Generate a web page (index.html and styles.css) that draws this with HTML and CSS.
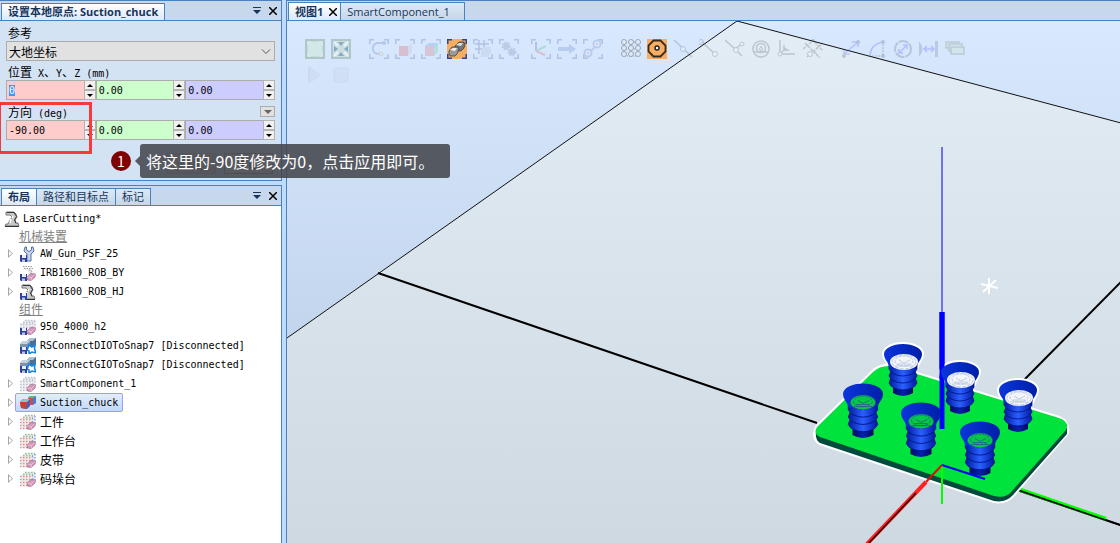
FILE: index.html
```
<!DOCTYPE html>
<html lang="zh-CN">

<head>
    <meta charset="utf-8">
    <meta name="viewport" content="width=device-width, initial-scale=1.0">
    <title>视图1</title>
    <link rel="stylesheet" href="styles.css">
</head>

<body>
    <!-- shared icons -->
    <svg class="defs" width="0" height="0" aria-hidden="true">
        <defs>
            <symbol id="corners" viewBox="0 0 20 20">
                <path d="M0 5V0H5M15 0H20V5M20 15V20H15M5 20H0V15" fill="none" stroke="#33448a" stroke-width="3" />
            </symbol>
            <symbol id="menu" viewBox="0 0 8 7">
                <path d="M0 0H8V1H0zM0 3H8L4 7z" fill="#17365d" />
            </symbol>
            <symbol id="close" viewBox="0 0 8 8">
                <path d="M0 0L8 8M8 0L0 8" stroke="#000" stroke-width="1.500" />
            </symbol>
            <symbol id="robot" viewBox="0 0 16 16">
                <path d="M2 1H10L12 3L13 6L11 9L12 12H14L15 15H1L2 13H4L6 9L8 6L6 4H2z" fill="#c9c9c9" stroke="#777" />
                <path d="M3 1.500H10L12.500 5.500L10.500 9L12 12.500M1 15.500H15" fill="none" stroke="#333" />
                <path d="M7 8L6 12M9 5L8 7" stroke="#fff" stroke-width="1.500" />
            </symbol>
            <symbol id="robot-off" viewBox="0 0 16 16">
                <path d="M4 4H11L13 7L10 9V14H5L9 7z" fill="#eee" />
                <path d="M3 1.500H13M4 3.500H13M9 5L12 6L9 11L10 14" fill="none" stroke="#999" stroke-dasharray="1.500 1" />
            </symbol>
            <symbol id="disk" viewBox="0 0 16 16">
                <path d="M0 9H7V16H1L0 15z" fill="#2f3f9f" />
                <path d="M2 9H6V12H2z" fill="#e8eefc" />
                <path d="M2 13.500H5V16H2z" fill="#b9c2dc" />
            </symbol>
            <symbol id="eraser" viewBox="0 0 16 16">
                <path d="M7 12L11 8.500L15.500 9L15 12L11 15.500L7.500 15z" fill="#d49aba" stroke="#a0607f" stroke-width=".7" />
                <path d="M7 12L11.500 12.500L15.500 9M11.500 12.500L11 15.500" fill="none" stroke="#f0cfe0" stroke-width=".7" />
            </symbol>
            <symbol id="wrench" viewBox="0 0 16 16">
                <path d="M5 1L4 5L7 8V15H11V8L14 5L13 1L11.500 1V4L9 5.500L6.500 4V1z" fill="#c5d3ea" stroke="#5670a3" />
            </symbol>
            <symbol id="grid" viewBox="0 0 16 16">
                <path d="M1 5L5 1H15V10L11 15H1z" fill="#f1ecec" />
                <path d="M0 5.500H11M0 8.500H11M0 11.500H11M0 14.500H9" stroke="#df8d8d" stroke-width="1.500" stroke-dasharray="1.500 1.500" />
                <path d="M3 3.500H13M5 1.500H15" fill="none" stroke="#8fbf9d" stroke-width="1.500" stroke-dasharray="1.500 1.500" />
                <path d="M12.500 4V12M15 2V10" stroke="#86a4dc" stroke-width="1.500" stroke-dasharray="1.500 1.500" />
            </symbol>
            <symbol id="grid-grey" viewBox="0 0 16 16">
                <path d="M1 5L5 1H15V10L11 15H1z" fill="#eceef2" />
                <path d="M0 5.500H11M0 8.500H11M0 11.500H11M0 14.500H9M3 3.500H13M5 1.500H15" stroke="#bcc0cd" stroke-width="1.500" stroke-dasharray="1.500 1.500" />
                <path d="M12.500 4V12M15 2V10" stroke="#bcc0cd" stroke-width="1.500" stroke-dasharray="1.500 1.500" />
            </symbol>
            <symbol id="smart" viewBox="0 0 16 16">
                <path d="M7 3L10 0H16V7L13 9H7z" fill="#4f6f92" />
                <path d="M7 3L10 0H16L13 3z" fill="#a9bfd2" />
                <path d="M0 6L3 3H10V10L7 13H0z" fill="#7d93ac" />
                <path d="M0 6L3 3H10L7 6z" fill="#c4d2df" />
                <path d="M7 12L9 7L12 9L15 7L14.500 11L16 15L12 14L9 16L9 13z" fill="#fff" stroke="#1583e0" stroke-width="1.600" />
            </symbol>
            <symbol id="cubes" viewBox="0 0 16 16">
                <path d="M8 3L10 1H16V8L13 10H8z" fill="#3d7be0" />
                <path d="M8 3L10 1H16L14 3z" fill="#62b58a" />
                <path d="M8 3H13V10H8z" fill="#d34f3d" />
                <path d="M0 7L3 4H10V11L7 14L1 13z" fill="#3566c8" />
                <path d="M0 7L3 4H10L7 7z" fill="#8cc8b0" />
                <path d="M0 7H7V14L1 13z" fill="#cf3f31" />
            </symbol>
        </defs>
    </svg>

    <div class="app">
        <aside class="sidebar">
            <section class="panel">
                <header class="tab-bar">
                    <h1 class="tab active">设置本地原点: Suction_chuck</h1>
                    <div class="panel-tools">
                        <button type="button" aria-label="菜单"><svg width="8" height="7"><use href="#menu" /></svg></button>
                        <button type="button" aria-label="关闭面板"><svg width="8" height="8"><use href="#close" /></svg></button>
                    </div>
                </header>
                <form class="origin-form" id="originForm">
                    <label for="reference">参考</label>
                    <div class="select-box">
                        <select id="reference">
                            <option>大地坐标</option>
                        </select>
                        <svg width="10" height="6"><path d="M1 .5L5 4.500L9 .5" fill="none" stroke="#555" /></svg>
                    </div>

                    <label for="posX">位置<span class="mono"> X</span>、<span class="mono">Y</span>、<span class="mono">Z (mm)</span></label>
                    <div class="vector">
                        <div class="field red">
                            <input type="text" id="posX" value="0">
                            <div class="spin"><button type="button" class="up" aria-label="X +"></button><button type="button" class="down" aria-label="X -"></button></div>
                        </div>
                        <div class="field green">
                            <input type="text" aria-label="位置 Y" value="0.00">
                            <div class="spin"><button type="button" class="up" aria-label="Y +"></button><button type="button" class="down" aria-label="Y -"></button></div>
                        </div>
                        <div class="field blue">
                            <input type="text" aria-label="位置 Z" value="0.00">
                            <div class="spin"><button type="button" class="up" aria-label="Z +"></button><button type="button" class="down" aria-label="Z -"></button></div>
                        </div>
                    </div>

                    <div class="label-row">
                        <label for="rotX">方向<span class="mono"> (deg)</span></label>
                        <button type="button" class="drop" aria-label="方向选项"></button>
                    </div>
                    <div class="vector">
                        <div class="field red">
                            <input type="text" id="rotX" value="-90.00">
                            <div class="spin"><button type="button" class="up" aria-label="RX +"></button><button type="button" class="down" aria-label="RX -"></button></div>
                        </div>
                        <div class="field green">
                            <input type="text" aria-label="方向 Y" value="0.00">
                            <div class="spin"><button type="button" class="up" aria-label="RY +"></button><button type="button" class="down" aria-label="RY -"></button></div>
                        </div>
                        <div class="field blue">
                            <input type="text" aria-label="方向 Z" value="0.00">
                            <div class="spin"><button type="button" class="up" aria-label="RZ +"></button><button type="button" class="down" aria-label="RZ -"></button></div>
                        </div>
                    </div>

                    <div class="actions">
                        <button type="submit" disabled>应用</button>
                        <button type="button">关闭</button>
                    </div>
                </form>
            </section>

            <section class="panel tree-panel">
                <header class="tab-bar">
                    <button type="button" class="tab active">布局</button>
                    <button type="button" class="tab">路径和目标点</button>
                    <button type="button" class="tab">标记</button>
                    <div class="panel-tools">
                        <button type="button" aria-label="菜单"><svg width="8" height="7"><use href="#menu" /></svg></button>
                        <button type="button" aria-label="关闭面板"><svg width="8" height="8"><use href="#close" /></svg></button>
                    </div>
                </header>
                <ul class="tree">
                    <li class="root"><svg class="icon"><use href="#robot" /></svg><span class="mono">LaserCutting*</span></li>
                    <li class="group">机械装置</li>
                    <li><i class="arrow"></i><span class="node"><svg class="icon"><use href="#wrench" /><use href="#disk" /></svg><span class="mono">AW_Gun_PSF_25</span></span></li>
                    <li><i class="arrow"></i><span class="node"><svg class="icon"><use href="#robot-off" /><use href="#disk" /><use href="#eraser" /></svg><span class="mono">IRB1600_ROB_BY</span></span></li>
                    <li><i class="arrow"></i><span class="node"><svg class="icon"><use href="#robot" /><use href="#disk" /></svg><span class="mono">IRB1600_ROB_HJ</span></span></li>
                    <li class="group">组件</li>
                    <li><i class="arrow none"></i><span class="node"><svg class="icon"><use href="#grid-grey" /><use href="#disk" /><use href="#eraser" /></svg><span class="mono">950_4000_h2</span></span></li>
                    <li><i class="arrow none"></i><span class="node"><svg class="icon"><use href="#smart" /><use href="#disk" /></svg><span class="mono">RSConnectDIOToSnap7 [Disconnected]</span></span></li>
                    <li><i class="arrow none"></i><span class="node"><svg class="icon"><use href="#smart" /><use href="#disk" /></svg><span class="mono">RSConnectGIOToSnap7 [Disconnected]</span></span></li>
                    <li><i class="arrow"></i><span class="node"><svg class="icon"><use href="#grid-grey" /><use href="#eraser" /></svg><span class="mono">SmartComponent_1</span></span></li>
                    <li><i class="arrow"></i><span class="node selected"><svg class="icon"><use href="#cubes" /></svg><span class="mono">Suction_chuck</span></span></li>
                    <li><i class="arrow"></i><span class="node"><svg class="icon"><use href="#grid" /><use href="#eraser" /></svg>工件</span></li>
                    <li><i class="arrow"></i><span class="node"><svg class="icon"><use href="#grid" /><use href="#eraser" /></svg>工作台</span></li>
                    <li><i class="arrow"></i><span class="node"><svg class="icon"><use href="#grid" /><use href="#eraser" /></svg>皮带</span></li>
                    <li><i class="arrow"></i><span class="node"><svg class="icon"><use href="#grid" /><use href="#eraser" /></svg>码垛台</span></li>
                </ul>
            </section>
        </aside>

        <main class="view">
            <header class="tab-bar">
                <div class="tab active">视图1 <button type="button" class="tab-close" aria-label="关闭视图"><svg width="8" height="8"><use href="#close" /></svg></button></div>
                <button type="button" class="tab">SmartComponent_1</button>
            </header>
            <div class="viewport">
                <svg class="scene" viewBox="287 21 833 522" preserveAspectRatio="xMinYMin slice">
                    <defs>
                        <linearGradient id="floor" gradientUnits="userSpaceOnUse" x1="0" y1="21" x2="0" y2="543">
                            <stop offset="0" stop-color="#e2edf6" />
                            <stop offset="1" stop-color="#cfd9e2" />
                        </linearGradient>
                        <linearGradient id="rubber">
                            <stop offset="0" stop-color="#001a9c" />
                            <stop offset=".5" stop-color="#2a60ff" />
                            <stop offset="1" stop-color="#0018a0" />
                        </linearGradient>
                        <linearGradient id="bell">
                            <stop offset="0" stop-color="#0b35dc" />
                            <stop offset="1" stop-color="#001fa8" />
                        </linearGradient>
                        <linearGradient id="foot">
                            <stop offset="0" stop-color="#000a60" />
                            <stop offset=".5" stop-color="#0620b0" />
                            <stop offset="1" stop-color="#000a60" />
                        </linearGradient>
                        <path id="rim" d="M-19 0A19 10 0 0 1 19 0C19 6 14 8 14 13H-14C-14 8 -19 6 -19 0z" />
                        <g id="cup">
                            <path d="M-10 30V39Q0 45 10 39V30z" fill="url(#foot)" />
                            <g fill="url(#rubber)" stroke="#000f80" stroke-width=".8">
                                <path d="M-12 23L-14 29Q-12 33 -9 34Q0 38 9 34Q12 33 14 29L12 23z" />
                                <path d="M-12 17L-14 22Q-12 26 -9 27Q0 31 9 27Q12 26 14 22L12 17z" />
                                <path d="M-14 8V15Q-12 19 -9 20Q0 24 9 20Q12 19 14 15V8z" />
                            </g>
                            <use href="#rim" fill="url(#bell)" />
                        </g>
                        <g id="rings" fill="none" stroke="#26439f" stroke-width=".6">
                            <ellipse cy="8" rx="12" ry="7" stroke-dasharray="4 1" />
                            <ellipse cy="7" rx="9" ry="5" stroke-dasharray="3 1" />
                            <path d="M-9 12H9M-5 6L0 9L6 6M-6 10H6" />
                        </g>
                    </defs>

                    <path d="M737 21L1200 144V600H287V338z" fill="url(#floor)" />
                    <path d="M287 338L737 21L1200 144" fill="none" stroke="#111" />
                    <path d="M378 273L817 423M1020 491L1200 552M1023 381L1200 202" fill="none" stroke="#000" stroke-width="2" />
                    <path d="M1018 489L1106 519" stroke="#0f0" stroke-width="4" />
                    <path d="M1018 490L1120 525" stroke="#000" stroke-width="1.500" />
                    <path d="M942 147V312" stroke="#4b4be6" stroke-width="1.500" />
                    <path d="M942 312V382" stroke="#00f" stroke-width="5" />

                    <!-- plate and selection outline -->
                    <g fill="#fff" stroke="#fff" stroke-width="4" stroke-linejoin="round">
                        <use href="#rim" x="903" y="354" />
                        <use href="#rim" x="960" y="372" />
                        <use href="#rim" x="1018" y="390" />
                        <path d="M817 427L873 372Q880 365 891 366L1059 418Q1069 422 1067 433L1013 495Q1006 503 994 501L820 443Q812 438 817 427z" />
                    </g>
                    <path d="M816 432L1067 428V434L1013 495Q1006 503 994 501L820 443Q815 440 816 432z" fill="#004b3c" />
                    <path d="M818 426L873 372Q880 365 891 366L1059 418Q1070 422 1066 430L1012 491Q1006 499 994 496L820 437Q812 433 818 426z" fill="#00e23c" />
                    <path d="M942 312V429" stroke="#00f" stroke-width="5" />

                    <use href="#cup" x="903" y="354" />
                    <use href="#cup" x="960" y="372" />
                    <use href="#cup" x="1018" y="390" />
                    <g fill="#f2f6fa">
                        <ellipse cx="904" cy="362" rx="14" ry="8" />
                        <ellipse cx="961" cy="380" rx="14" ry="8" />
                        <ellipse cx="1019" cy="398" rx="14" ry="8" />
                    </g>
                    <g opacity=".4">
                        <use href="#rings" x="904" y="354" />
                        <use href="#rings" x="961" y="372" />
                        <use href="#rings" x="1019" y="390" />
                    </g>
                    <g transform="translate(863 394) scale(1.050)"><use href="#cup" /><ellipse cy="8" rx="12" ry="7" fill="#05c944" /><use href="#rings" /></g>
                    <g transform="translate(921 413) scale(1.050)"><use href="#cup" /><ellipse cy="8" rx="12" ry="7" fill="#05c944" /><use href="#rings" /></g>
                    <g transform="translate(980 432) scale(1.050)"><use href="#cup" /><ellipse cy="8" rx="12" ry="7" fill="#05c944" /><use href="#rings" /></g>

                    <!-- local origin -->
                    <path d="M942 465L985 479" stroke="#00f" stroke-width="2" />
                    <path d="M942 466V504" stroke="#0f0" stroke-width="2" />
                    <path d="M942 465L926 482" stroke="#e01000" stroke-width="2" />
                    <path d="M926 482L866 545" stroke="#f22" stroke-width="4" />
                    <path d="M916 493L868 544" stroke="#300" stroke-width="1.500" />
                    <path d="M989 278V294M981 284L998 288M996 280L983 292" stroke="#fff" stroke-width="2" />
                </svg>

                <div class="toolbar">
                    <div class="tool-group">
                        <button type="button" class="strong" aria-label="查看全部"><svg viewBox="0 0 20 20"><path d="M0 0H20V20H0z" fill="#7fa08a" /><path d="M2 2H18V18H2z" fill="#aecfae" /><path d="M6 3H14L17 6V14L14 17H6L3 14V6z" fill="#cfe8cd" /><path d="M3 6V3H6M14 3H17V6M17 14V17H14M6 17H3V14" fill="none" stroke="#fff" /></svg></button>
                        <button type="button" class="strong" aria-label="查看中心"><svg viewBox="0 0 20 20"><path d="M0 0H20V20H0z" fill="#7fa08a" /><path d="M2 2H18V18H2z" fill="#b9d6b9" /><path d="M3 3L7 7M17 3L13 7M3 17L7 13M17 17L13 13" stroke="#fff" stroke-width="2" /><path d="M7 3H13L10 7zM7 17H13L10 13zM3 7V13L7 10zM17 7V13L13 10z" fill="#2c5a82" /></svg></button>
                    </div>
                    <div class="tool-group">
                        <button type="button" aria-label="选择曲线"><svg viewBox="0 0 20 20"><use href="#corners" /><path d="M15 4H8Q3 6 4 11Q5 15 11 15" fill="none" stroke="#4660a8" stroke-width="2" /><circle cx="15" cy="4" r="2" fill="#4660a8" /><circle cx="12" cy="15" r="2" fill="#ffe24a" stroke="#886" /></svg></button>
                        <button type="button" aria-label="选择表面"><svg viewBox="0 0 20 20"><use href="#corners" /><path d="M4 7L8 4H17V13L13 17H4z" fill="#aeb8c6" /><path d="M4 7H13V17H4z" fill="#d33" /><path d="M4 7L8 4H17L13 7z" fill="#e6ebf0" /></svg></button>
                        <button type="button" aria-label="选择实体"><svg viewBox="0 0 20 20"><use href="#corners" /><path d="M4 7L8 4H17V13L13 17H4z" fill="#4b8" /><path d="M4 7H13V17H4z" fill="#d65050" /><path d="M4 7L8 4H17L13 7z" fill="#3e80d8" /></svg></button>
                        <button type="button" class="on" aria-label="选择部件"><svg viewBox="0 0 20 20"><path d="M0 0H20V20H0z" fill="#f7ad62" /><use href="#corners" /><path d="M8 7L12 3H17L18 5L17 9L14 12H8z" fill="#777" stroke="#333" stroke-width=".7" /><path d="M9 6L12 4H16L14 7z" fill="#ddd" /><path d="M2 12L5 8H11L12 10L10 15L8 17H3L2 15z" fill="#999" stroke="#333" stroke-width=".7" /><path d="M3 11L6 9H10L8 12z" fill="#eee" /></svg></button>
                        <button type="button" aria-label="选择组"><svg viewBox="0 0 20 20"><use href="#corners" /><path d="M6 1V15M11 1V15M2 5H16M2 10H16" stroke="#33448a" stroke-width="1.500" /><path d="M8 10L11 8H18V14L15 18H8z" fill="#a9b7c9" /></svg></button>
                        <button type="button" aria-label="选择机械装置"><svg viewBox="0 0 20 20"><use href="#corners" /><g fill="none" stroke="#5d6a98" stroke-width="3" stroke-dasharray="1.500 1"><circle cx="7" cy="7" r="3" /><circle cx="13" cy="13" r="3" /></g><circle cx="7" cy="7" r="3" fill="#5d6a98" /><circle cx="13" cy="13" r="3" fill="#5d6a98" /></svg></button>
                    </div>
                    <div class="tool-group near">
                        <button type="button" aria-label="选择目标点"><svg viewBox="0 0 20 20"><use href="#corners" /><path d="M5 3V12" stroke="#33b" stroke-width="2" /><path d="M5 12L15 7" stroke="#2b4" stroke-width="2" /><path d="M5 12L14 16" stroke="#d33" stroke-width="2" /></svg></button>
                        <button type="button" aria-label="选择移动指令"><svg viewBox="0 0 20 20"><use href="#corners" /><path d="M1 8H12V5L19 10L12 15V12H1z" fill="#4d6fc0" /></svg></button>
                        <button type="button" aria-label="选择路径"><svg viewBox="0 0 20 20"><use href="#corners" /><path d="M6 14L14 6" stroke="#4d6fc0" stroke-width="2" /><circle cx="5" cy="14" r="3.500" fill="#fff" stroke="#4d6fc0" stroke-width="2" /><circle cx="14" cy="5" r="3.500" fill="#fff" stroke="#4d6fc0" stroke-width="2" /><path d="M4 14H6M13 5H15" stroke="#d33" stroke-width="2" /></svg></button>
                    </div>
                    <div class="tool-group snap">
                        <button type="button" class="strong" aria-label="捕捉对象"><svg viewBox="0 0 20 20"><g fill="none" stroke="#555"><path d="M3 3H17V17H3zM10 3V17M3 10H17" stroke-dasharray="1 1" /><g fill="#e6f0fc"><circle cx="3" cy="3" r="2.500" /><circle cx="10" cy="3" r="2.500" /><circle cx="17" cy="3" r="2.500" /><circle cx="3" cy="9" r="2.500" /><circle cx="10" cy="9" r="2.500" /><circle cx="17" cy="9" r="2.500" /><circle cx="3" cy="15" r="2.500" /><circle cx="10" cy="15" r="2.500" /><circle cx="17" cy="15" r="2.500" /></g></g></svg></button>
                        <button type="button" class="on" aria-label="捕捉中心"><svg viewBox="0 0 20 20"><path d="M0 0H20V20H0z" fill="#f7ad62" /><path d="M6.500 1.500H13.500L18.500 6.500V12.500L13.500 17.500H6.500L1.500 12.500V6.500z" fill="none" stroke="#3a2a18" stroke-width="1.800" /><circle cx="10" cy="9" r="2" fill="#fff" stroke="#222" stroke-width="1.500" /></svg></button>
                        <button type="button" aria-label="捕捉中点"><svg viewBox="0 0 20 20"><path d="M1 1L19 18" stroke="#444" stroke-width="1.500" /><circle cx="10" cy="10" r="2.500" fill="#fff" stroke="#444" /></svg></button>
                        <button type="button" aria-label="捕捉末端"><svg viewBox="0 0 20 20"><path d="M3 3L16 15" stroke="#444" stroke-width="1.500" /><circle cx="2" cy="3" r="2.500" fill="none" stroke="#444" /><circle cx="16" cy="15" r="2.500" fill="#fff" stroke="#444" /></svg></button>
                        <button type="button" aria-label="捕捉边缘"><svg viewBox="0 0 20 20"><path d="M0 1L10 10L17 5M10 10L17 17" fill="none" stroke="#444" stroke-width="1.500" /><circle cx="11" cy="11" r="2.500" fill="#fff" stroke="#444" /><circle cx="17" cy="5" r="2" fill="#fff" stroke="#444" /></svg></button>
                        <button type="button" aria-label="捕捉重心"><svg viewBox="0 0 20 20"><g fill="none" stroke="#444" stroke-width="1.500"><circle cx="10" cy="10" r="8" /><circle cx="10" cy="9" r="4.500" /><path d="M3 13H17M10 7V13" /></g><circle cx="10" cy="10" r="1.500" fill="#fff" stroke="#444" /></svg></button>
                        <button type="button" aria-label="捕捉本地原点"><svg viewBox="0 0 20 20"><path d="M3 1V15H18M3 15L9 9M7 6V11H12" fill="none" stroke="#444" stroke-width="1.500" /><circle cx="3" cy="15" r="2" fill="#fff" stroke="#444" /></svg></button>
                        <button type="button" aria-label="捕捉网格"><svg viewBox="0 0 20 20"><path d="M0 10L12 0M4 18L20 4M2 4L17 19M9 0L20 12" stroke="#444" stroke-width="1.500" stroke-dasharray="3 1" /><path d="M6 16L10 11L14 15" fill="none" stroke="#444" /><circle cx="7" cy="15" r="2.500" fill="#fff" stroke="#444" /></svg></button>
                    </div>
                    <div class="tool-group">
                        <button type="button" aria-label="点到点"><svg viewBox="0 0 20 20"><path d="M4 14L16 4" stroke="#33f" stroke-width="1.500" /><path d="M3 10V15H9M11 3H17V8" fill="none" stroke="#33f" stroke-width="1.500" /><circle cx="3" cy="17" r="2" fill="#345" /><circle cx="17" cy="3" r="2" fill="#345" /></svg></button>
                        <button type="button" aria-label="角度"><svg viewBox="0 0 20 20"><path d="M3 16Q4 5 16 3" fill="none" stroke="#33f" stroke-width="1.500" /><path d="M2 17H16V3" fill="none" stroke="#456" stroke-width="1.500" stroke-dasharray="2 1" /><circle cx="16" cy="3" r="2" fill="#345" /><circle cx="16" cy="17" r="2" fill="#345" /></svg></button>
                        <button type="button" aria-label="直径"><svg viewBox="0 0 20 20"><circle cx="10" cy="10" r="8" fill="none" stroke="#456" stroke-width="2" stroke-dasharray="10 1" /><path d="M6 14L14 6M6 10V14H10M10 6H14V10" fill="none" stroke="#33f" stroke-width="1.500" /></svg></button>
                        <button type="button" aria-label="最短距离"><svg viewBox="0 0 20 20"><path d="M0 2Q7 10 0 18zM16 2H19V18H16z" fill="#567" /><path d="M5 10H15M8 7L5 10L8 13M12 7L15 10L12 13" fill="none" stroke="#33f" stroke-width="1.500" /></svg></button>
                        <button type="button" class="strong" aria-label="保持测量"><svg viewBox="0 0 20 20"><g fill="#cfe3d6" stroke="#9aaba6" stroke-width="1.500"><path d="M1 3H14V9H1z" /><path d="M4 5H17V12H4z" /><path d="M6 8H19V15H6z" /></g></svg></button>
                    </div>
                    <div class="tool-group sim">
                        <button type="button" aria-label="播放"><svg viewBox="0 0 20 20"><path d="M3 2H6V16L15 10L6 3V16L3 18z" fill="#889" /><path d="M5 2L16 10L5 18z" fill="#aab" /></svg></button>
                        <button type="button" aria-label="停止"><svg viewBox="0 0 20 20"><path d="M3 3H17V17H3z" fill="#bbc" stroke="#889" /></svg></button>
                    </div>
                </div>
            </div>
        </main>

        <!-- tutorial notes on top of the window -->
        <div class="highlight"></div>
        <div class="step">
            <span class="step-number">1</span>
            <p class="step-text">将这里的-90度修改为0，点击应用即可。</p>
        </div>
    </div>

    <script>
        const posX = document.getElementById('posX');
        const originForm = document.getElementById('originForm');

        posX.focus();
        posX.select();

        originForm.addEventListener('submit', function (event) {
            event.preventDefault();
        });
    </script>
</body>

</html>
```

FILE: styles.css
```
* {
    box-sizing: border-box;
}

body {
    margin: 0;
    background-color: #bfdbff;
    font-family: "Noto Sans CJK SC", sans-serif;
    font-size: 12px;
    color: #000;
}

button,
input,
select {
    font: inherit;
    color: inherit;
    margin: 0;
    padding: 0;
    border: none;
    border-radius: 0;
    background: none;
}

.defs {
    position: absolute;
}

.mono {
    font-family: "DejaVu Sans Mono", monospace;
    font-size: 10px;
    white-space: pre;
}

.app {
    position: relative;
    display: flex;
    gap: 4px;
    min-height: 100vh;
}

.sidebar {
    width: 282px;
    flex: none;
    display: flex;
    flex-direction: column;
    gap: 4px;
}

.panel {
    border: 1px solid #4a82bd;
    border-left: none;
    background-color: #d4e3f3;
}

.tree-panel {
    flex: 1;
    border-bottom: none;
    background-color: #fff;
}

/* tabs */
.tab-bar {
    display: flex;
    align-items: flex-end;
    height: 20px;
    padding-left: 1px;
    background-color: #c7d8ed;
    border-bottom: 1px solid #4a82bd;
}

.tab {
    display: flex;
    align-items: center;
    height: 17px;
    margin: 0 0 0 -1px;
    padding: 0 6px;
    border: 1px solid #4a82bd;
    border-bottom: none;
    background: linear-gradient(#dce8f6, #c6d7e8);
    font-family: "Open Sans", "Noto Sans CJK SC", sans-serif;
    font-size: 11px;
    line-height: 16px;
    font-weight: normal;
    color: #17365d;
    white-space: nowrap;
}

.tab.active {
    background: linear-gradient(#fff, #dce9f8);
    font-weight: bold;
}

.tab:first-child {
    margin-left: 0;
}

.panel-tools {
    display: flex;
    align-items: center;
    gap: 8px;
    height: 19px;
    margin-left: auto;
    padding-right: 4px;
}

.panel-tools button,
.tab-close {
    display: flex;
    cursor: pointer;
}

.tab-close {
    margin-left: 6px;
}

/* origin form */
.origin-form {
    padding: 3px 6px 6px;
}

.origin-form label {
    display: block;
    height: 17px;
    padding-left: 2px;
    line-height: 17px;
}

.origin-form .mono {
    line-height: 1;
}

.select-box {
    position: relative;
    margin-bottom: 2px;
}

.select-box select {
    appearance: none;
    display: block;
    width: 100%;
    height: 20px;
    padding-left: 2px;
    border: 1px solid #acacac;
    background-color: #e1e1e1;
}

.select-box svg {
    position: absolute;
    right: 4px;
    top: 8px;
}

.vector {
    display: flex;
    margin-bottom: 3px;
}

.field {
    display: flex;
    flex: 1;
    min-width: 0;
    height: 20px;
    border: 1px solid #acacac;
    border-right: none;
}

.field input {
    flex: 1;
    min-width: 0;
    padding-left: 2px;
    outline: none;
    font-family: "DejaVu Sans Mono", monospace;
    font-size: 10px;
}

.field input::selection {
    background-color: #3399ff;
    color: #fff;
}

.red {
    background-color: #ffcccc;
}

.green {
    background-color: #ccffcc;
}

.blue {
    background-color: #ccccff;
}

.spin {
    display: flex;
    flex-direction: column;
    width: 12px;
    margin: -1px 0;
    background-color: #f0f0f0;
}

.spin button {
    display: flex;
    align-items: center;
    justify-content: center;
    flex: 1;
    border: 1px solid #b4b4b4;
}

.up::before,
.down::before {
    content: "";
    border: 3px solid transparent;
    border-top-width: 0;
    border-bottom: 3px solid #000;
}

.down::before {
    border-top: 3px solid #000;
    border-bottom-width: 0;
}

.label-row {
    display: flex;
    align-items: center;
    justify-content: space-between;
}

.drop {
    display: flex;
    align-items: center;
    justify-content: center;
    width: 15px;
    height: 11px;
    border: 1px solid #acacac;
    background-color: #e1e1e1;
}

.drop::before {
    content: "";
    border: 4px solid transparent;
    border-top: 4px solid #666;
    border-bottom-width: 0;
}

.actions {
    display: flex;
    justify-content: flex-end;
    gap: 8px;
    padding: 10px 2px 0 0;
}

.actions button {
    width: 49px;
    height: 21px;
    border: 1px solid #8c8c8c;
    background-color: #e1e1e1;
    line-height: 16px;
}

.actions button:disabled {
    border-color: #bfbfbf;
    background-color: #ccc;
    color: #838383;
}

/* layout tree */
.tree {
    list-style: none;
    margin: 0;
    padding: 3px 0 0;
}

.tree li {
    display: flex;
    align-items: center;
    height: 19px;
    padding-left: 8px;
    line-height: 18px;
}

.tree .root {
    gap: 3px;
    padding-left: 4px;
}

.tree .group {
    height: 16px;
    padding-left: 19px;
    line-height: 14px;
    color: #808080;
    text-decoration: underline;
}

.icon {
    width: 16px;
    height: 16px;
    flex: none;
}

.arrow {
    width: 7px;
    height: 9px;
}

.arrow::before {
    content: "";
    display: block;
    width: 5px;
    height: 9px;
    background-color: #a6a6a6;
    clip-path: polygon(0 0, 100% 50%, 0 100%, 0 0, 1px 2px, 1px 7px, 4px 50%, 1px 2px);
}

.arrow.none {
    visibility: hidden;
}

.node {
    display: flex;
    align-items: center;
    gap: 4px;
    height: 19px;
    padding: 0 4px;
    border: 1px solid transparent;
    border-radius: 2px;
}

.node.selected {
    border-color: #9d9df5;
    background: linear-gradient(#e3edfc, #c0d8fa);
}

/* 3D view */
.view {
    flex: 1;
    min-width: 0;
    display: flex;
    flex-direction: column;
    border: 1px solid #4a82bd;
    border-right: none;
    border-bottom: none;
}

.view .tab {
    height: 18px;
    padding-right: 14px;
}

.view .tab.active {
    padding-right: 3px;
}

.viewport {
    position: relative;
    flex: 1;
    overflow: hidden;
    background: linear-gradient(#d8e9ff, #c2d4eb 330px);
}

.scene {
    position: absolute;
    top: 0;
    left: 0;
    width: 100%;
    height: 100%;
}

.toolbar {
    position: relative;
    display: flex;
    flex-wrap: wrap;
    gap: 6px 18px;
    padding: 18px;
}

.tool-group {
    display: flex;
    gap: 6px;
}

.tool-group.near {
    margin-left: -6px;
}

.tool-group.sim {
    flex-basis: 100%;
}

.tool-group button {
    width: 20px;
    height: 20px;
    opacity: 0.22;
}

.tool-group svg {
    display: block;
    width: 20px;
    height: 20px;
}

.tool-group .strong {
    opacity: 0.45;
}

.tool-group .on {
    opacity: 1;
}

.tool-group.sim button {
    opacity: 0.12;
}

/* notes */
.highlight {
    position: absolute;
    left: 0;
    top: 102px;
    width: 92px;
    height: 52px;
    border: 3px solid #fa3a3a;
    border-left-width: 1px;
}

.step {
    position: absolute;
    left: 111px;
    top: 144px;
    display: flex;
    align-items: center;
    gap: 9px;
}

.step-number {
    width: 20px;
    height: 20px;
    border-radius: 50%;
    background-color: #800000;
    color: #fff;
    font-size: 14px;
    line-height: 20px;
    text-align: center;
}

.step-text {
    position: relative;
    margin: 0;
    padding: 0 6px;
    min-width: 310px;
    border-radius: 3px;
    background-color: rgba(65, 68, 73, 0.86);
    color: #fff;
    font-size: 16px;
    line-height: 34px;
    white-space: nowrap;
}

.step-text::before {
    content: "";
    position: absolute;
    left: -5px;
    top: 12px;
    border: 5px solid transparent;
    border-right-color: rgba(65, 68, 73, 0.86);
    border-left-width: 0;
}
```
